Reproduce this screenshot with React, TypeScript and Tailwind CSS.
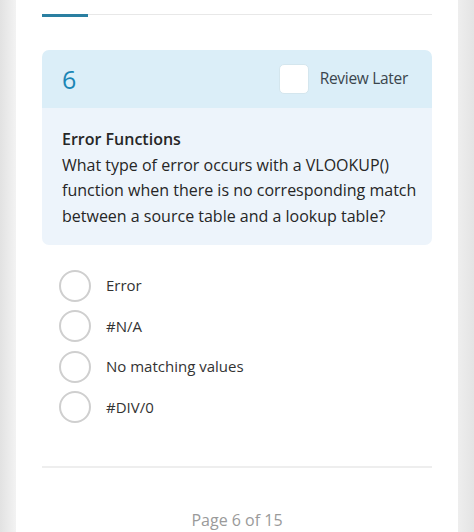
import React from "react";

const options = ["Error", "#N/A", "No matching values", "#DIV/0"];

export default function App() {
  return (
    <div
      className="flex h-[532px] w-[474px] overflow-hidden bg-[#ececec]"
      style={{ fontFamily: '"Open Sans", "Noto Sans", sans-serif' }}
    >
      <div className="w-[16px] bg-gradient-to-r from-[#e2e2e2] to-[#f3f3f3]" />
      <div className="flex w-[442px] flex-col bg-white px-[26px]">
        <div className="mt-[14px] flex h-[3px] items-start">
          <div className="h-[3px] w-[46px] bg-[#2a7fa1]" />
          <div className="h-px flex-1 bg-[#e8e8e8]" />
        </div>
        <div className="mt-[33px] overflow-hidden rounded-[7px]">
          <div className="flex h-[58px] items-center justify-between bg-[#dbeef8] pl-[20px] pr-[24px]">
            <span className="text-[25px] leading-none text-[#1a86b5]">6</span>
            <div className="flex items-center gap-[11px]">
              <div className="h-[30px] w-[30px] rounded-[5px] border border-[#d4e6ee] bg-white" />
              <span className="text-[15.5px] tracking-[-0.3px] text-[#3a454d]">Review Later</span>
            </div>
          </div>
          <div className="bg-[#edf4fb] pb-[17px] pl-[20px] pr-[12px] pt-[19px] text-[16px] leading-[25.5px] text-[#262626]">
            <div className="font-semibold">Error Functions</div>
            <div>
              What type of error occurs with a VLOOKUP() function when there is no corresponding match between a source table and a lookup table?
            </div>
          </div>
        </div>
        <div className="mt-[25px] flex flex-col gap-[8.5px] pl-[17px]">
          {options.map((o) => (
            <div key={o} className="flex items-center gap-[15px]">
              <div className="h-[32px] w-[32px] rounded-full border-[2px] border-[#cfcfcf] bg-white" />
              <span className="text-[15px] text-[#333]">{o}</span>
            </div>
          ))}
        </div>
        <div className="mt-[43px] h-[2px] bg-[#eeeeee]" />
        <div className="mt-[40px] text-center text-[16px] text-[#9a9a9a]">Page 6 of 15</div>
      </div>
      <div className="w-[16px] bg-gradient-to-r from-[#eeeeee] to-[#e4e4e4]" />
    </div>
  );
}
